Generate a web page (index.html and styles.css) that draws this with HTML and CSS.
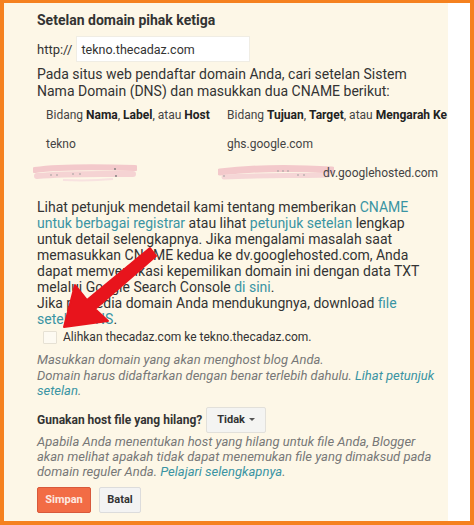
FILE: index.html
```html
<!DOCTYPE html>
<html lang="id">
<head>
    <meta charset="UTF-8">
    <meta name="viewport" content="width=device-width, initial-scale=1.0">
    <title>Setelan domain pihak ketiga</title>
    <link rel="stylesheet" href="styles.css">
</head>
<body>
    <div class="frame">
        <div class="panel">
            <h2>Setelan domain pihak ketiga</h2>

            <div class="url-row">
                <span>http://</span>
                <input type="text" class="url-input" value="tekno.thecadaz.com">
            </div>

            <p class="lead">Pada situs web pendaftar domain Anda, cari setelan Sistem Nama Domain (DNS) dan masukkan dua CNAME berikut:</p>

            <div class="cname">
                <div class="cell">Bidang&nbsp;<b>Nama</b>,&nbsp;<b>Label</b>, atau&nbsp;<b>Host</b></div>
                <div class="cell">Bidang&nbsp;<b>Tujuan</b>,&nbsp;<b>Target</b>, atau&nbsp;<b>Mengarah Ke</b></div>
                <div class="cell">tekno</div>
                <div class="cell">ghs.google.com</div>
                <div class="cell">
                    <svg class="redact redact-host" width="104" height="18" viewBox="0 0 104 18">
                        <path d="M2 6 C30 2, 70 3, 102 4" stroke="#f3c9cb" stroke-width="6" fill="none" stroke-linecap="round"/>
                        <path d="M4 12 C35 9, 70 10, 100 10" stroke="#f5d3d3" stroke-width="6" fill="none" stroke-linecap="round"/>
                        <path d="M30 16 C50 17, 70 16, 80 15" stroke="#f8e2e0" stroke-width="2" fill="none"/>
                        <circle cx="18" cy="11" r="0.8" fill="#999"/><circle cx="24" cy="11" r="0.8" fill="#999"/>
                        <circle cx="40" cy="10" r="0.8" fill="#999"/><circle cx="47" cy="10" r="0.8" fill="#999"/>
                        <circle cx="82" cy="5" r="0.9" fill="#777"/><circle cx="83" cy="12" r="0.9" fill="#777"/>
                    </svg>
                </div>
                <div class="cell">
                    <svg class="redact redact-target" width="116" height="18" viewBox="0 0 116 18">
                        <path d="M2 8 C35 4, 80 4, 114 6" stroke="#f3c9cb" stroke-width="7" fill="none" stroke-linecap="round"/>
                        <path d="M6 13 C40 11, 80 12, 110 11" stroke="#f5d6d6" stroke-width="5" fill="none" stroke-linecap="round"/>
                        <circle cx="6" cy="12" r="0.8" fill="#999"/><circle cx="60" cy="7" r="0.8" fill="#999"/>
                        <circle cx="65" cy="7" r="0.8" fill="#999"/><circle cx="70" cy="7" r="0.8" fill="#999"/>
                        <circle cx="80" cy="11" r="0.8" fill="#999"/><circle cx="86" cy="11" r="0.8" fill="#999"/>
                    </svg>dv.googlehosted.com
                </div>
            </div>

            <p class="lead lead-gap">Lihat petunjuk mendetail kami tentang memberikan <a href="#">CNAME untuk berbagai registrar</a> atau lihat <a href="#">petunjuk setelan</a> lengkap untuk detail selengkapnya. Jika mengalami masalah saat memasukkan CNAME kedua ke dv.googlehosted.com, Anda dapat memverifikasi kepemilikan domain ini dengan data TXT melalui Google Search Console <a href="#">di sini</a>.<br>Jika penyedia domain Anda mendukungnya, download <a href="#">file setelan DNS</a>.</p>

            <label class="redirect">
                <input type="checkbox" class="check">
                <span>Alihkan thecadaz.com ke tekno.thecadaz.com.</span>
            </label>

            <p class="hint">Masukkan domain yang akan menghost blog Anda.<br>Domain harus didaftarkan dengan benar terlebih dahulu. <a href="#">Lihat petunjuk setelan</a>.</p>

            <div class="missing">
                <span>Gunakan host file yang hilang?</span>
                <span class="select">Tidak <span class="caret"></span></span>
            </div>

            <p class="hint hint-tight">Apabila Anda menentukan host yang hilang untuk file Anda, Blogger akan melihat apakah tidak dapat menemukan file yang dimaksud pada domain reguler Anda. <a href="#">Pelajari selengkapnya</a>.</p>

            <div class="actions">
                <button class="btn btn-save">Simpan</button>
                <button class="btn btn-cancel">Batal</button>
            </div>
        </div>
        <div class="side"></div>
    </div>

    <!-- red marker drawn over the screenshot -->
    <svg class="arrow" width="474" height="525" viewBox="0 0 474 525">
        <polygon points="156,256 150,248 87,300 75,285 64,327 108,321 95,309" fill="#e8141c" stroke="#e8141c" stroke-width="2" stroke-linejoin="round"/>
    </svg>
</body>
</html>
```

FILE: styles.css
```css
/* Page frame */
body {
    margin: 0;
    font-family: Roboto, 'Noto Sans', sans-serif;
    position: relative;
}

.frame {
    width: 474px;
    height: 525px;
    box-sizing: border-box;
    border: 4px solid #f5811f;
    border-top-width: 3px;
    display: flex;
    background-color: #ffffff;
}

.panel {
    width: 444px;
    box-sizing: border-box;
    background-color: #fdf7e7;
    padding: 8px 11px 0 33px;
    color: #333;
}

.side {
    flex: 1;
    background-color: #ffffff;
}

a {
    color: #3a94a3;
    text-decoration: none;
}

h2 {
    margin: 0;
    font-size: 14px;
    line-height: 18px;
    font-weight: 700;
    color: #333;
}

/* URL input */
.url-row {
    display: flex;
    align-items: center;
    gap: 4px;
    margin-top: 7px;
    font-size: 13px;
}

.url-input {
    width: 174px;
    height: 26px;
    box-sizing: border-box;
    border: 1px solid #f0ede4;
    background: #ffffff;
    padding: 0 4px;
    font-family: Roboto, sans-serif;
    font-size: 12.5px;
    color: #333;
}

.lead {
    margin: 4px 0 0;
    max-width: 395px;
    font-size: 14px;
    line-height: 17px;
}

.lead-gap {
    margin-top: 12px;
    line-height: 16px;
}

/* CNAME table */
.cname {
    display: grid;
    grid-template-columns: 181px auto;
    font-size: 12px;
    color: #444;
}

.cname .cell {
    height: 29px;
    padding-left: 9px;
    display: flex;
    align-items: center;
    white-space: nowrap;
}

.cname b {
    color: #222;
}

.redact {
    flex-shrink: 0;
}

.redact-host {
    margin-left: -13px;
}

.redact-target {
    margin-left: -9px;
    margin-right: -11px;
}

/* Redirect checkbox */
.redirect {
    display: flex;
    align-items: center;
    margin-top: 2px;
    padding-left: 6px;
    height: 16px;
    font-size: 12px;
    color: #333;
}

.check {
    appearance: none;
    width: 14px;
    height: 13px;
    margin: 0 6px 0 0;
    border: 1px solid #e6e1d4;
    background: #fdfaf2;
    border-radius: 1px;
}

.hint {
    margin: 7px 0 0;
    font-size: 13px;
    line-height: 15.5px;
    font-style: italic;
    color: #777;
}

.hint-tight {
    margin-top: 1px;
    line-height: 15px;
}

/* Missing files host */
.missing {
    display: flex;
    align-items: center;
    gap: 4px;
    margin-top: 8px;
    font-size: 12px;
    font-weight: 700;
    color: #333;
}

.select {
    display: flex;
    align-items: center;
    justify-content: space-between;
    width: 60px;
    height: 26px;
    box-sizing: border-box;
    padding: 0 10px;
    background: #f4f4f2;
    border: 1px solid #e2e0da;
    border-radius: 2px;
    font-size: 11px;
}

.caret {
    width: 0;
    height: 0;
    border-left: 3.5px solid transparent;
    border-right: 3.5px solid transparent;
    border-top: 3.5px solid #555;
}

/* Buttons */
.actions {
    display: flex;
    gap: 8px;
    margin-top: 8px;
}

.btn {
    height: 26px;
    padding: 0;
    border: 1px solid #dcdcdc;
    border-radius: 2px;
    background-color: #f3f3f3;
    color: #333;
    font-family: Roboto, sans-serif;
    font-size: 11px;
    font-weight: 700;
}

.btn-save {
    width: 54px;
    background-color: #f26c45;
    border-color: #d8593b;
    color: #fde8e0;
}

.btn-cancel {
    width: 42px;
}

.arrow {
    position: absolute;
    top: 0;
    left: 0;
    pointer-events: none;
}
```
